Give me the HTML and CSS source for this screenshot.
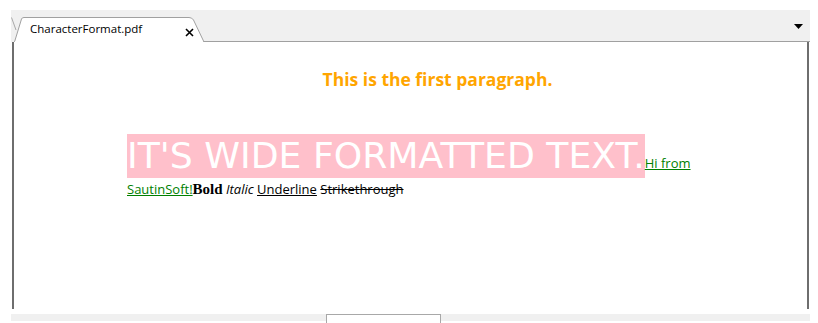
FILE: index.html
```html
<!DOCTYPE html>
<html>
<head>
<meta charset="utf-8">
<link rel="stylesheet" href="styles.css">
</head>
<body>
<div class="frame">
  <div class="tabstrip">
    <div class="tab">
      <svg class="tab-shape" width="196" height="25" viewBox="0 0 196 25">
        <path d="M0.5 0.5 L5 13" stroke="#a8a8a8" fill="none"/>
        <path d="M3.5 25 L10.5 2 Q11 0.5 13 0.5 L178 0.5 Q181 0.5 182.5 3 L193 25 Z" fill="#ffffff" stroke="#a0a0a0"/>
        <rect x="4" y="24" width="188" height="1" fill="#ffffff"/>
      </svg>
      <span class="tab-label">CharacterFormat.pdf</span>
      <svg class="tab-close" width="9" height="9" viewBox="0 0 9 9">
        <path d="M1 1 L8 8 M8 1 L1 8" stroke="#000" stroke-width="1.6"/>
      </svg>
    </div>
    <div class="strip-rest">
      <svg class="dropdown" width="9" height="5" viewBox="0 0 9 5"><path d="M0 0 H9 L4.5 5 Z" fill="#000"/></svg>
    </div>
  </div>
  <div class="content">
    <div class="page">
      <p class="heading">This is the first paragraph.</p>
      <p class="para"><span class="wide">IT'S WIDE FORMATTED TEXT.</span><span class="link">Hi from</span> <span class="link">SautinSoft!</span><b class="bold">Bold</b> <i class="ital">Italic</i> <span class="under">Underline</span> <span class="strike">Strikethrough</span></p>
    </div>
  </div>
  <div class="hscroll"><div class="thumb"></div></div>
</div>
</body>
</html>
```
FILE: styles.css
```css
html, body {
  margin: 0;
  padding: 0;
  background: #ffffff;
  height: 323px;
  overflow: hidden;
}
body {
  font-family: "Open Sans", "Noto Sans", sans-serif;
}
.frame {
  margin: 10px 0 0 11px;
  width: 799px;
}
.tabstrip {
  height: 32px;
  background: #f0f0f0;
  display: flex;
  align-items: flex-end;
}
.tab {
  position: relative;
  width: 193px;
  height: 25px;
  flex: none;
}
.tab-shape {
  position: absolute;
  left: 0;
  top: 0;
}
.tab-label {
  position: absolute;
  left: 19px;
  top: 4px;
  font-family: "Open Sans", sans-serif;
  font-size: 11.5px;
  color: #000;
  white-space: nowrap;
}
.tab-close {
  position: absolute;
  left: 174px;
  top: 11px;
}
.strip-rest {
  flex: 1;
  height: 100%;
  border-bottom: 1px solid #a0a0a0;
  box-sizing: border-box;
  display: flex;
  justify-content: flex-end;
  align-items: center;
  padding-right: 7px;
}
.dropdown {
  display: block;
  margin-top: 1px;
}
.content {
  height: 267px;
  margin: 0 1px;
  border-left: 2px solid #6e6e6e;
  border-right: 2px solid #6e6e6e;
  background: #fff;
  box-sizing: border-box;
}
.page {
  width: 621px;
  padding: 25px 0 0 113px;
}
.heading {
  margin: 0;
  text-align: center;
  color: #ffa500;
  font-family: "Open Sans", sans-serif;
  font-weight: bold;
  font-size: 17.5px;
  line-height: 24px;
}
.para {
  margin: 43px 0 0;
  font-family: "Open Sans", sans-serif;
  font-size: 13px;
  line-height: 25px;
  color: #000;
}
.wide {
  font-family: "DejaVu Sans", sans-serif;
  font-size: 36.2px;
  line-height: normal;
  color: #ffffff;
  background: #ffc0cb;
  padding: 0 0 1px;
}
.link {
  color: #008000;
  text-decoration: underline;
}
.bold {
  font-family: "Liberation Serif", serif;
  font-weight: bold;
  font-size: 15px;
}
.ital {
  font-style: italic;
}
.under {
  text-decoration: underline;
}
.strike {
  text-decoration: line-through;
}
.hscroll {
  height: 7px;
  background: #f0f0f0;
  padding-left: 315px;
  overflow: visible;
}
.thumb {
  margin-top: 5px;
  width: 113px;
  height: 20px;
  border: 1px solid #a8a8a8;
  border-bottom: none;
  background: #fff;
}
```
